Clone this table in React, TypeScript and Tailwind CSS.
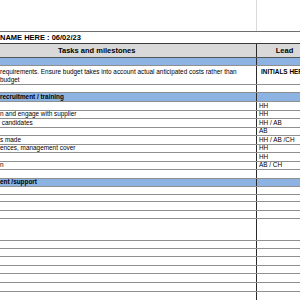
const items: { task: string; lead: string }[] = [
  { task: '', lead: 'HH' },
  { task: 'n and engage with supplier', lead: 'HH' },
  { task: ' candidates', lead: 'HH / AB' },
  { task: '', lead: 'AB' },
  { task: 's made', lead: 'HH / AB /CH' },
  { task: 'ences, management cover', lead: 'HH' },
  { task: '', lead: 'HH' },
  { task: 'n', lead: 'AB / CH' },
  { task: '', lead: '' },
];

const blankRows = ['h-[8.4px]', 'h-[7.6px]', 'h-[8.3px]', 'h-[8.4px]', 'h-[21.6px]', 'h-[8.4px]', 'h-[8.3px]', 'h-[8.3px]', 'h-[8.4px]', 'h-[9px]', 'h-[8.6px]', 'h-[9px]', 'h-[9px]'];

function Row({ h, task, lead }: { h: string; task?: string; lead?: string }) {
  return (
    <div className={`grid grid-cols-[257px_1fr] border-b border-[#8f8f8f] ${h}`}>
      <div className="border-r border-[#2b2b2b] flex items-center whitespace-pre overflow-hidden">{task}</div>
      <div className="flex items-center pl-[2px] whitespace-pre overflow-hidden">{lead}</div>
    </div>
  );
}

function BlueRow({ h, label }: { h: string; label: string }) {
  return (
    <div className={`grid grid-cols-[257px_1fr] border-b border-[#8f8f8f] bg-[#8db3e2] ${h}`}>
      <div className="border-r border-[#2b2b2b] flex items-center font-bold whitespace-pre overflow-hidden">{label}</div>
      <div />
    </div>
  );
}

export default function App() {
  return (
    <div className="w-[300px] h-[300px] overflow-hidden bg-white text-black font-['Liberation_Sans',Arial,sans-serif] text-[6.4px] leading-[8px]">
      <div className="w-[312px]">
        {/* empty sheet area above the table */}
        <div className="h-[32px] grid grid-cols-[257px_1fr] border-b border-[#6f6f6f]">
          <div className="border-r border-[#dadada]" />
          <div />
        </div>

        <div className="h-[12px] flex items-center font-bold text-[7.5px] border-b border-[#3a3a3a]">
          NAME HERE : 06/02/23
        </div>

        <div className="h-[14px] grid grid-cols-[257px_1fr] bg-[#d9d9d9] border-b border-[#555] font-bold text-[7.5px]">
          <div className="border-r border-[#2b2b2b] flex items-center pl-[58px]">Tasks and milestones</div>
          <div className="flex items-center justify-center">Lead</div>
        </div>

        <BlueRow h="h-[8px]" label="" />

        <div className="h-[18.5px] grid grid-cols-[257px_1fr] border-b border-[#8f8f8f]">
          <div className="border-r border-[#2b2b2b] pt-[2px] overflow-hidden">
            <div className="whitespace-nowrap">requirements. Ensure budget takes into account actual anticipated costs rather than</div>
            <div>budget</div>
          </div>
          <div className="pt-[2px] pl-[4px] font-bold whitespace-nowrap overflow-hidden">INITIALS HERE</div>
        </div>

        <Row h="h-[8.5px]" />
        <BlueRow h="h-[9px]" label="recruitment / training" />

        {items.map((it, i) => (
          <Row key={i} h="h-[8.5px]" task={it.task} lead={it.lead} />
        ))}

        <BlueRow h="h-[8px]" label="ent /support" />

        {blankRows.map((h, i) => (
          <Row key={i} h={h} />
        ))}
      </div>
    </div>
  );
}
